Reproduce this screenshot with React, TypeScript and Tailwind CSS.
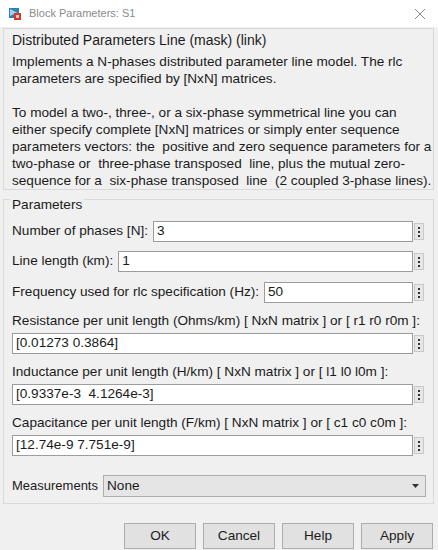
import React from "react";

function Dots() {
  return (
    <div className="ml-[1px] flex h-[17px] w-[10px] shrink-0 flex-col items-center justify-center gap-[2px] border border-[#c9c9c9] bg-[#e6e6e6]">
      <span className="h-[2px] w-[2px] bg-[#333]" />
      <span className="h-[2px] w-[2px] bg-[#333]" />
      <span className="h-[2px] w-[2px] bg-[#333]" />
    </div>
  );
}

function Field({ value }: { value: string }) {
  return (
    <div className="flex flex-1 items-center">
      <div className="flex h-[21px] flex-1 items-center border border-[#9c9c9c] bg-white pl-[3px] whitespace-pre">
        {value}
      </div>
      <Dots />
    </div>
  );
}

const desc = [
  "Implements a N-phases distributed parameter line model. The rlc",
  "parameters are specified by [NxN] matrices.",
  " ",
  "To model a two-, three-, or a six-phase symmetrical line you can",
  "either specify complete [NxN] matrices or simply enter sequence",
  "parameters vectors: the  positive and zero sequence parameters for a",
  "two-phase or  three-phase transposed  line, plus the mutual zero-",
  "sequence for a  six-phase transposed  line  (2 coupled 3-phase lines).",
];

export default function App() {
  return (
    <div
      className="h-[550px] w-[438px] overflow-hidden bg-[#f0f0f0] text-[13.6px] text-[#1b1b1b]"
      style={{ fontFamily: '"Liberation Sans", Arial, sans-serif' }}
    >
      {/* title bar */}
      <div className="flex h-[27px] items-center bg-white pl-[9px] pr-[12px]">
        <svg width="12" height="12" viewBox="0 0 12 12">
          <rect x="0" y="0" width="10" height="10" fill="#2d7fb8" />
          <path d="M1 1 L8 4.5 L1 8 Z" fill="#9fd3f0" />
          <rect x="5" y="5" width="7" height="7" fill="#d23b2b" />
          <rect x="7" y="7" width="3" height="3" fill="#f3c4b8" />
        </svg>
        <span className="ml-[8px] text-[11px] text-[#8a8a8a]">Block Parameters: S1</span>
        <svg className="ml-auto" width="12" height="12" viewBox="0 0 12 12">
          <path d="M1 1 L11 11 M11 1 L1 11" stroke="#8a8a8a" strokeWidth="1" />
        </svg>
      </div>

      <div className="pl-[3px] pr-[4px]">
        {/* description */}
        <div className="mt-[1px] border border-[#d9d9d9] pl-[8px]">
          <div className="pt-[2px] text-[14px] leading-[18px]">Distributed Parameters Line (mask) (link)</div>
          <div className="mt-[4px] leading-[17px]">
            {desc.map((l, i) => (
              <div key={i} className="whitespace-pre">
                {l}
              </div>
            ))}
          </div>
        </div>

        {/* parameters */}
        <div className="mt-[9px] border border-[#d9d9d9] pb-[6px]">
          <div className="-mt-[3px] ml-[6px] w-fit bg-[#f0f0f0] px-[2px] leading-[16px]">Parameters</div>
          <div className="pl-[8px] pr-[9px]">
            <div className="mt-[8px] flex items-center">
              <span className="mr-[5px] whitespace-pre">Number of phases [N]:</span>
              <Field value="3" />
            </div>
            <div className="mt-[9px] flex items-center">
              <span className="mr-[5px] whitespace-pre">Line length (km):</span>
              <Field value="1" />
            </div>
            <div className="mt-[10px] flex items-center">
              <span className="mr-[5px] whitespace-pre">Frequency used for rlc specification (Hz):</span>
              <Field value="50" />
            </div>

            <div className="mt-[9px] leading-[17px] whitespace-pre">Resistance per unit length (Ohms/km) [ NxN matrix ] or [ r1 r0 r0m ]:</div>
            <div className="mt-[4px] flex">
              <Field value="[0.01273 0.3864]" />
            </div>
            <div className="mt-[9px] leading-[17px] whitespace-pre">Inductance per unit length (H/km) [ NxN matrix ] or [ l1 l0 l0m ]:</div>
            <div className="mt-[4px] flex">
              <Field value="[0.9337e-3  4.1264e-3]" />
            </div>
            <div className="mt-[9px] leading-[17px] whitespace-pre">Capacitance per unit length (F/km) [ NxN matrix ] or [ c1 c0 c0m ]:</div>
            <div className="mt-[4px] flex">
              <Field value="[12.74e-9 7.751e-9]" />
            </div>

            <div className="mt-[19px] flex items-center">
              <span className="w-[91px] shrink-0 text-[13px]">Measurements</span>
              <div className="mr-[-2px] flex h-[22px] flex-1 items-center border border-[#adadad] bg-[#e5e5e5] pl-[3px]">
                <span>None</span>
                <svg className="ml-auto mr-[6px]" width="7" height="4" viewBox="0 0 7 4">
                  <path d="M0 0 L7 0 L3.5 4 Z" fill="#333" />
                </svg>
              </div>
            </div>
          </div>
        </div>

        {/* buttons */}
        <div className="mr-[-3px] mt-[19px] flex justify-end gap-[7px] pr-[4px]">
          {["OK", "Cancel", "Help", "Apply"].map((b) => (
            <div
              key={b}
              className="flex h-[26px] w-[72px] items-center justify-center border border-[#adadad] bg-[#e1e1e1]"
            >
              {b}
            </div>
          ))}
        </div>
      </div>
    </div>
  );
}
